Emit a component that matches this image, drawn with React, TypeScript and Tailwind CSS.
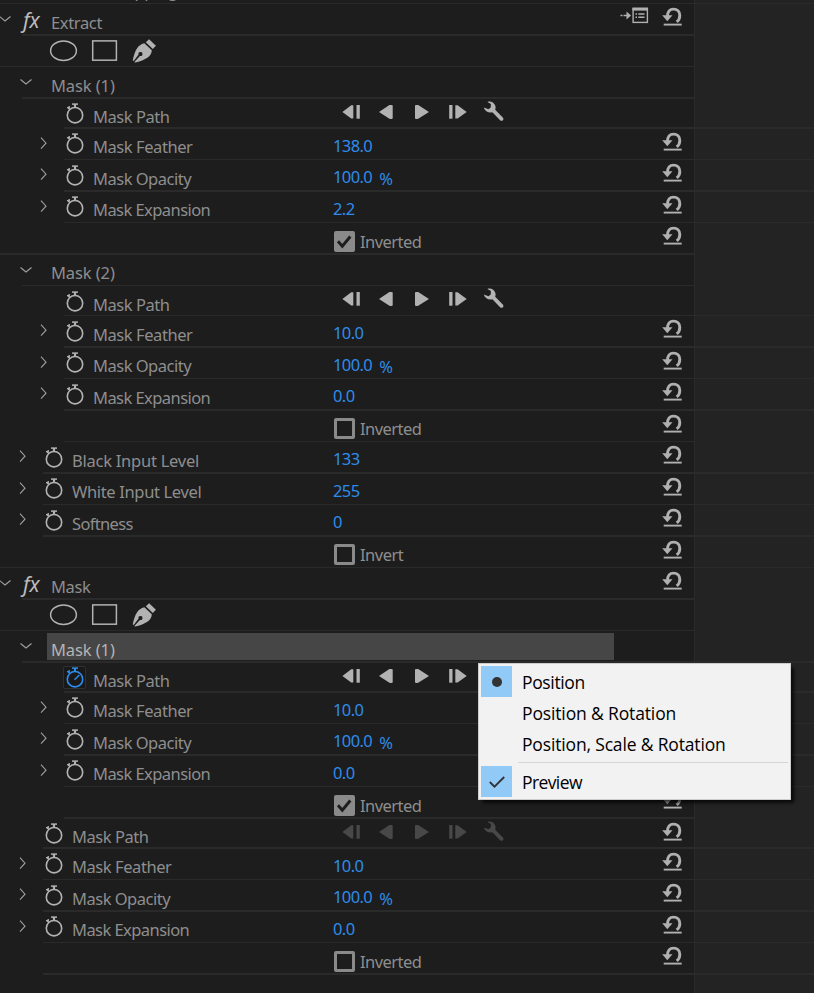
import React from "react";

type RowData = {
  h: string;
  line: string;
  indent: string;
  right?: boolean;
  kind: "clip" | "effect" | "shapes" | "mask" | "path" | "value" | "check";
  label?: string;
  value?: string;
  unit?: string;
  level?: 1 | 2;
  reset?: boolean;
  checked?: boolean;
  preset?: boolean;
  active?: boolean;
  dim?: boolean;
};

const L1 = "h-px";
const L2 = "h-[2px]";
const I0 = "ml-0";
const I22 = "ml-[22px]";
const I43 = "ml-[43px]";
const I64 = "ml-[64px]";

const rows: RowData[] = [
  { kind: "clip", label: "Time Remapping", h: "h-[4px]", line: L1, indent: I0, right: true },
  { kind: "effect", label: "Extract", h: "h-[32px]", line: L2, indent: I22, reset: true, preset: true },
  { kind: "shapes", h: "h-[31px]", line: L1, indent: I0 },
  { kind: "mask", label: "Mask (1)", h: "h-[32px]", line: L2, indent: I22 },
  { kind: "path", label: "Mask Path", h: "h-[30px]", line: L2, indent: I64, level: 2, right: true },
  { kind: "value", label: "Mask Feather", value: "138.0", h: "h-[31px]", line: L1, indent: I64, level: 2, reset: true, right: true },
  { kind: "value", label: "Mask Opacity", value: "100.0", unit: "%", h: "h-[32px]", line: L2, indent: I64, level: 2, reset: true, right: true },
  { kind: "value", label: "Mask Expansion", value: "2.2", h: "h-[31px]", line: L1, indent: I64, level: 2, reset: true, right: true },
  { kind: "check", label: "Inverted", checked: true, h: "h-[32px]", line: L2, indent: I0, reset: true },
  { kind: "mask", label: "Mask (2)", h: "h-[31px]", line: L1, indent: I22 },
  { kind: "path", label: "Mask Path", h: "h-[30px]", line: L1, indent: I64, level: 2, right: true },
  { kind: "value", label: "Mask Feather", value: "10.0", h: "h-[32px]", line: L2, indent: I64, level: 2, reset: true, right: true },
  { kind: "value", label: "Mask Opacity", value: "100.0", unit: "%", h: "h-[31px]", line: L1, indent: I64, level: 2, reset: true, right: true },
  { kind: "value", label: "Mask Expansion", value: "0.0", h: "h-[32px]", line: L2, indent: I64, level: 2, reset: true, right: true },
  { kind: "check", label: "Inverted", h: "h-[31px]", line: L1, indent: I64, reset: true },
  { kind: "value", label: "Black Input Level", value: "133", h: "h-[32px]", line: L2, indent: I43, level: 1, reset: true, right: true },
  { kind: "value", label: "White Input Level", value: "255", h: "h-[31px]", line: L1, indent: I43, level: 1, reset: true, right: true },
  { kind: "value", label: "Softness", value: "0", h: "h-[32px]", line: L2, indent: I43, level: 1, reset: true, right: true },
  { kind: "check", label: "Invert", h: "h-[31px]", line: L1, indent: I0, reset: true, right: true },
  { kind: "effect", label: "Mask", h: "h-[32px]", line: L2, indent: I22, reset: true },
  { kind: "shapes", h: "h-[31px]", line: L1, indent: I0 },
  { kind: "mask", label: "Mask (1)", active: true, h: "h-[32px]", line: L2, indent: I22, right: true },
  { kind: "path", label: "Mask Path", active: true, h: "h-[30px]", line: L2, indent: I64, level: 2, right: true },
  { kind: "value", label: "Mask Feather", value: "10.0", h: "h-[31px]", line: L1, indent: I64, level: 2, reset: true, right: true },
  { kind: "value", label: "Mask Opacity", value: "100.0", unit: "%", h: "h-[32px]", line: L2, indent: I64, level: 2, reset: true, right: true },
  { kind: "value", label: "Mask Expansion", value: "0.0", h: "h-[31px]", line: L1, indent: I64, level: 2, reset: true, right: true },
  { kind: "check", label: "Inverted", checked: true, h: "h-[32px]", line: L2, indent: I64, reset: true },
  { kind: "path", label: "Mask Path", dim: true, h: "h-[30px]", line: L2, indent: I43, level: 1, reset: true, right: true },
  { kind: "value", label: "Mask Feather", value: "10.0", h: "h-[31px]", line: L1, indent: I43, level: 1, reset: true, right: true },
  { kind: "value", label: "Mask Opacity", value: "100.0", unit: "%", h: "h-[32px]", line: L2, indent: I43, level: 1, reset: true, right: true },
  { kind: "value", label: "Mask Expansion", value: "0.0", h: "h-[31px]", line: L1, indent: I43, level: 1, reset: true, right: true },
  { kind: "check", label: "Inverted", h: "h-[32px]", line: L2, indent: I43, reset: true, right: true },
];

// Letter spacing per label; anything not listed uses the default.
const tracking: Record<string, string> = {
  "Mask (1)": "tracking-[-0.100px]",
  "Mask (2)": "tracking-[-0.100px]",
  "Mask Path": "tracking-[-0.450px]",
  "Mask Feather": "tracking-[-0.430px]",
  "Mask Opacity": "tracking-[-0.500px]",
  "Mask Expansion": "tracking-[-0.560px]",
  "Black Input Level": "tracking-[-0.250px]",
  Softness: "tracking-[-0.650px]",
  Inverted: "tracking-[-0.550px]",
  Invert: "tracking-[-0.500px]",
};

const ChevronDown = () => (
  <svg className="h-[6px] w-[12px] shrink-0" viewBox="0 0 12 6" fill="none" stroke="#a0a0a0" strokeWidth="1.1">
    <path d="M.5 .5 6 5 11.5 .5" />
  </svg>
);

const ChevronRight = () => (
  <svg className="h-[13px] w-[7px] shrink-0" viewBox="0 0 7 13" fill="none" stroke="#a0a0a0" strokeWidth="1.1">
    <path d="M1 .7 6 6.2 1 11.7" />
  </svg>
);

const Stopwatch = ({ on }: { on?: boolean }) => {
  const c = on ? "#2d8ceb" : "#b2b2b2";
  return (
    <svg className="h-[21px] w-[20px] shrink-0" viewBox="0 0 20 21" fill="none" stroke={c}>
      <circle cx="10" cy="12.2" r="7.7" strokeWidth="1.6" />
      <path d="M7 1.1h6" strokeWidth="1.5" />
      <path d="M10 1v3.6" strokeWidth="2.2" />
      <path d="M2 4.6h2.600M4.200 3v3.300M3 5.800l1.800-1.300" strokeWidth="1.4" />
      {on && <path d="M9.5 12.7 14.3 8" strokeWidth="1.5" />}
    </svg>
  );
};

const Reset = () => (
  <svg className="h-[19px] w-[21px]" viewBox="0 0 21 19" fill="none">
    <path d="M5.500 9.500C5.500 4.800 7.800 2.100 11.500 2.100c3.700 0 6.300 2.500 6.300 6.300 0 2.700-1.100 4.900-3.100 6.500" stroke="#b0b0b0" strokeWidth="2.900" />
    <path d="M.2 8.200h10.300L5.300 14.300z" fill="#b0b0b0" />
    <path d="M1.700 17.600h18" stroke="#b0b0b0" strokeWidth="1.900" />
  </svg>
);

const Preset = () => (
  <svg className="h-[17px] w-[29px]" viewBox="0 0 29 17" fill="none" stroke="#b0b0b0">
    <path d="M.5 8.500h2M3.500 8.500h5" strokeWidth="1.500" />
    <path d="M6.500 4.500 11 8.500 6.500 12.500z" fill="#b0b0b0" stroke="none" />
    <rect x="13.100" y="1.200" width="14.300" height="14.200" strokeWidth="1.400" />
    <path d="M12.500 2.300h15.500" strokeWidth="2.600" />
    <path d="M15.500 7h1.500M18.300 7h6.200M15.500 10.300h1.500M18.300 10.300h6.200" strokeWidth="1.500" />
  </svg>
);

const Transport = ({ dim }: { dim?: boolean }) => {
  const c = dim ? "#484848" : "#b2b2b2";
  return (
    <svg className="mt-[2px] ml-[8px] h-[22px] w-[166px]" viewBox="0 0 166 22" fill={c}>
      <path d="M1.400 10.900 10.200 4.300H12.300V17.600H10.200z" />
      <rect x="15.500" y="4" width="3.300" height="13.700" />
      <path d="M38 10.900 48.400 4.100Q51.700 3.600 51.700 4.500V17.300Q51.700 18.200 48.400 17.700z" />
      <path d="M74 4.500Q74 3.600 77.200 4.100L88 10.900 77.200 17.700Q74 18.200 74 17.300z" />
      <rect x="108.200" y="4" width="3.300" height="13.700" />
      <path d="M114.300 4.200h2.300L125.700 10.900 116.600 17.600h-2.300z" />
      <path transform="translate(-.8 0)" d="M147.200 .9c3.500-1.100 7.100.8 8 4.200.3 1.300.2 2.500-.2 3.600l7.600 7.900c.8.800.8 1.900.1 2.600-.8.800-2 .8-2.800 0l-7.700-8c-3.600.9-7.500-.9-8.600-4.800l4.700 1.800 2.200-1.700.2-3.400z" />
    </svg>
  );
};

const Shapes = () => (
  <svg className="ml-[48px] h-[30px] w-[112px]" viewBox="48 0 112 30" fill="none" stroke="#b2b2b2" strokeWidth="1.500">
    <ellipse cx="63.500" cy="14.700" rx="12.900" ry="9.700" />
    <rect x="92.700" y="4.900" width="23.700" height="19.300" />
    <g fill="#b2b2b2" stroke="none">
      <path d="M149.100 3.200 155.900 9.800 152.800 13 145.800 6.200z" />
      <path d="M144.300 7.200 151.800 14.200C151.400 20.400 147 23.200 135.300 26.600L134.400 25.900 139.900 19.900A2 2 0 1 0 138.600 18.600L133.700 25 132.700 24.300C135.400 13.400 137.600 9 144.300 7.200z" />
    </g>
  </svg>
);

const labelText = "text-[16.500px] leading-[20px] whitespace-pre";
const Label = ({ text, className }: { text?: string; className?: string }) => (
  <span className={labelText + " " + (tracking[text ?? ""] ?? "tracking-[-0.350px]") + " " + (className ?? "")}>{text}</span>
);

const LeftCell = ({ r }: { r: RowData }) => {
  if (r.kind === "shapes") return <Shapes />;
  if (r.kind === "clip")
    return (
      <div className="flex h-full items-end pb-[3px] pl-[51px]">
        <Label text={r.label} />
      </div>
    );
  if (r.kind === "effect")
    return (
      <div className="flex h-full items-start">
        <div className="mt-[12px] -ml-px w-[24px] shrink-0"><ChevronDown /></div>
        <span className="mt-[4px] w-[28px] text-[21px] leading-[24px] tracking-[-0.300px] text-[#bcbcbc] italic">fx</span>
        <Label text={r.label} className="self-end pb-[3px]" />
      </div>
    );
  if (r.kind === "mask")
    return (
      <div className="flex h-full items-start pl-[20px]">
        <div className="mt-[12px] w-[27px] shrink-0"><ChevronDown /></div>
        <div className={r.active ? "mt-[2px] flex h-[27px] w-[567px] shrink-0 items-end bg-[#464646] pl-[4px] text-[#b4b4b4]" : "flex h-full items-end pb-[3px] pl-[4px]"}>
          <Label text={r.label} />
        </div>
      </div>
    );
  if (r.kind === "check") return <div />;
  const low = r.kind === "path" && r.line === L1;
  return (
    <div className={r.level === 2 ? "flex h-full items-start pl-[40px]" : "flex h-full items-start pl-[19px]"}>
      <div className="mt-[8px] w-[7px]">{r.kind === "value" && <ChevronRight />}</div>
      <div className={"ml-[16px] flex h-[23px] w-[23px] items-center justify-center self-end border " + (low ? "mb-[3px] " : r.kind === "path" ? "mb-[4px] " : "mb-[5px] ") + (r.active ? "rounded-[2px] border-[#303030] bg-[#191919]" : "border-transparent")}>
        <Stopwatch on={r.active} />
      </div>
      <Label text={r.label} className={"ml-[7px] self-end " + (low ? "pb-px" : r.kind === "path" ? "pb-[2px]" : "pb-[3px]")} />
    </div>
  );
};

const ValueCell = ({ r }: { r: RowData }) => {
  if (r.kind === "path") return <Transport dim={r.dim} />;
  if (r.kind === "value")
    return (
      <div className="flex items-start pt-[7px] text-[16.500px] leading-[20px] tracking-[-0.600px] text-[#2d8ceb]">
        <span>{r.value}</span>
        {r.unit && <span className="mt-[2px] ml-[7px]">{r.unit}</span>}
      </div>
    );
  if (r.kind === "check")
    return (
      <div className="flex h-full items-start">
        <span className={"ml-px flex size-[21px] items-center justify-center rounded-[2px] " + (r.line === L1 ? "mt-[7px] " : "mt-[8px] ") + (r.checked ? "bg-[#8a8a8a]" : "border-3 border-[#8a8a8a]")}>
          {r.checked && (
            <svg className="size-[21px]" viewBox="0 0 21 21" fill="none" stroke="#1d1d1d" strokeWidth="2.900">
              <path d="M4 10.300 8.300 15.200 16.300 5.500" />
            </svg>
          )}
        </span>
        <Label text={r.label} className="ml-[5px] self-end pb-[3px]" />
      </div>
    );
  return <div />;
};

const Row = ({ r }: { r: RowData }) => (
  <div className={"flex overflow-hidden " + r.h}>
    <div className="grid w-[694px] grid-rows-[100%]">
      <div className={"col-start-1 row-start-1 self-end bg-[#2a2a2a] " + r.line + " " + r.indent} />
      <div className="col-start-1 row-start-1 grid h-full grid-cols-[333px_1fr_74px] grid-rows-[100%] text-[#8e8e8e]">
        <LeftCell r={r} />
        <ValueCell r={r} />
        <div className="flex items-start pt-[3px]">
          <div className="w-[42px]">{r.preset && <Preset />}</div>
          {r.reset && <Reset />}
        </div>
      </div>
    </div>
    <div className="flex flex-1 items-end border-l border-[#2a2a2a] bg-[#232323]">
      {r.right && <div className={"w-full bg-[#2a2a2a] " + r.line} />}
    </div>
  </div>
);

const MenuItem = ({ label, mark, track }: { label: string; mark?: "dot" | "check"; track: string }) => (
  <div className="flex h-[31px] items-center">
    <div className={"flex size-[31px] items-center justify-center " + (mark ? "bg-[#91c9f7]" : "")}>
      {mark === "dot" && <span className="size-[10px] rounded-full bg-[#333]" />}
      {mark === "check" && (
        <svg className="h-[12px] w-[16px]" viewBox="0 0 16 12" fill="none" stroke="#333" strokeWidth="1.800">
          <path d="M.8 6 5.500 10.700 15.200 1" />
        </svg>
      )}
    </div>
    <span className={"ml-[10px] text-[17.500px] leading-[24px] whitespace-pre text-black " + track}>{label}</span>
  </div>
);

export default function App() {
  return (
    <div className="relative flex h-[993px] w-[814px] flex-col overflow-hidden bg-[#1d1d1d] font-['Noto_Sans',sans-serif]">
      {rows.map((r, i) => (
        <Row key={i} r={r} />
      ))}
      <div className="flex flex-1">
        <div className="w-[694px]" />
        <div className="flex-1 border-l border-[#2a2a2a] bg-[#232323]" />
      </div>
      <div className="absolute top-[663px] left-[478px] h-[137px] w-[313px] border border-[#cccccc] bg-[#f2f2f2] p-[2px] font-['Open_Sans',sans-serif] shadow-[4px_4px_3px_-1px_rgba(0,0,0,0.7)]">
        <MenuItem label="Position" mark="dot" track="tracking-[-0.350px]" />
        <MenuItem label="Position & Rotation" track="tracking-[-0.140px]" />
        <MenuItem label="Position, Scale & Rotation" track="tracking-[-0.160px]" />
        <div className="mt-[3px] mb-[3px] ml-[37px] h-px bg-[#d4d4d4]" />
        <MenuItem label="Preview" mark="check" track="tracking-[-0.600px]" />
      </div>
    </div>
  );
}
